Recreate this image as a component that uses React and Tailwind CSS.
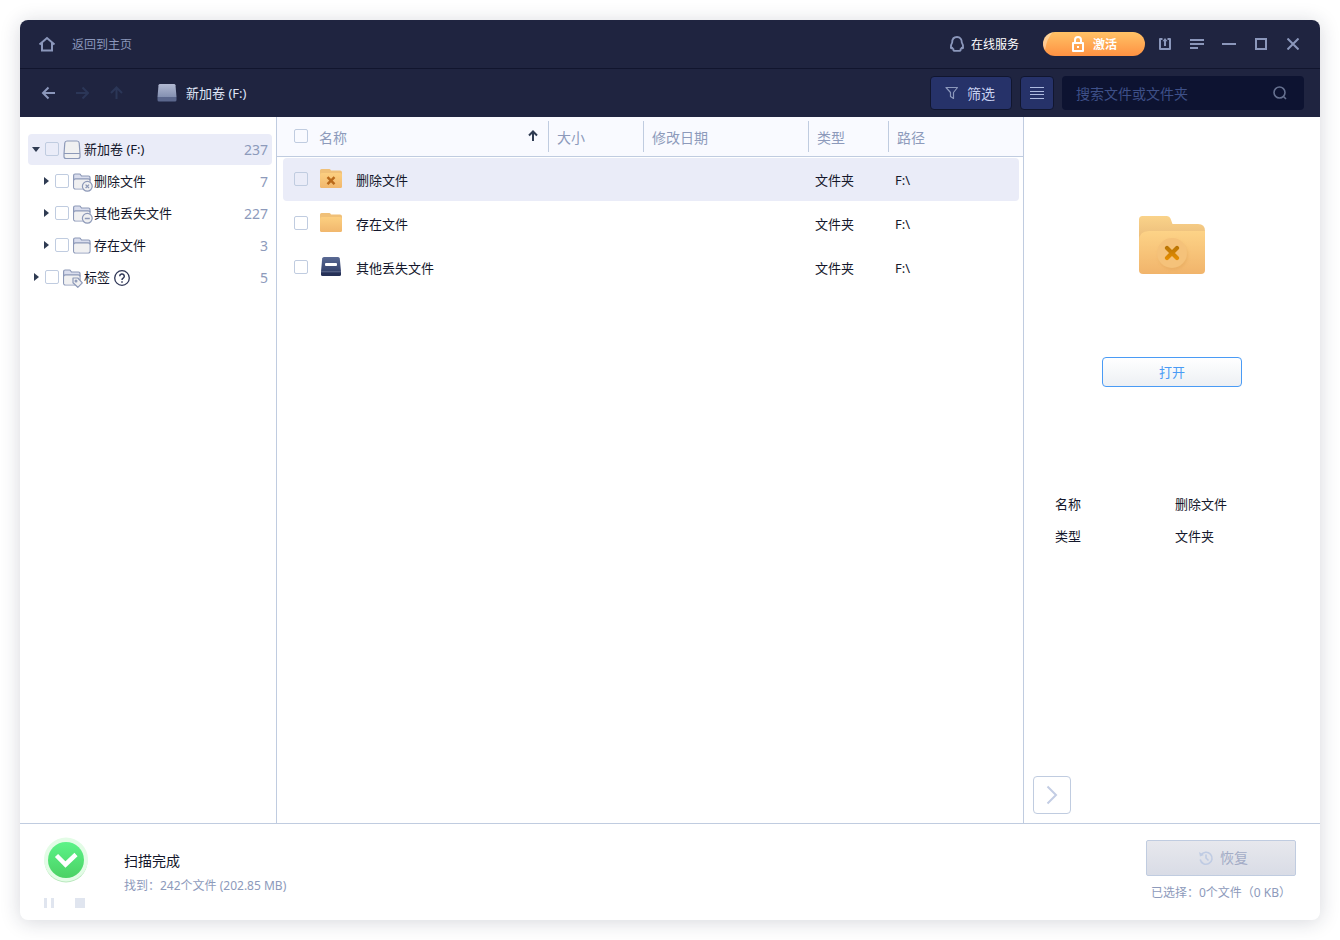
import { useState } from 'react';

const treeItems = [
  { id: 'volume', name: '新加卷 (F:)', count: 237, level: 0, icon: 'drive', open: true },
  { id: 'deleted', name: '删除文件', count: 7, level: 1, icon: 'deleted' },
  { id: 'lost', name: '其他丢失文件', count: 227, level: 1, icon: 'lost' },
  { id: 'existing', name: '存在文件', count: 3, level: 1, icon: 'folder' },
  { id: 'tags', name: '标签', count: 5, level: 0, icon: 'tag', help: true },
];

const files = [
  { id: 'deleted', name: '删除文件', type: '文件夹', path: 'F:\\', icon: 'deleted' },
  { id: 'existing', name: '存在文件', type: '文件夹', path: 'F:\\', icon: 'folder' },
  { id: 'lost', name: '其他丢失文件', type: '文件夹', path: 'F:\\', icon: 'drive' },
];

const columns = ['大小', '修改日期', '类型', '路径'];

function Checkbox({ label }) {
  return (
    <input
      type="checkbox"
      aria-label={label}
      className="mb-0.5 size-3.5 shrink-0 appearance-none rounded-xs border border-[#c0cce0] checked:bg-[#4a9bf5]"
    />
  );
}

function Caret({ open }) {
  return (
    <svg className="mb-0.5" width="10" height="10" viewBox="0 0 10 10" fill="#2f3b52">
      {open ? <path d="M1 3h8L5 8z" /> : <path d="M3 1v8l5-4z" />}
    </svg>
  );
}

function TreeIcon({ type }) {
  if (type === 'drive') {
    return (
      <svg width="18" height="20" viewBox="0 0 18 20" fill="#f0f0f1" stroke="#8d99b8" strokeWidth="1.200">
        <path d="M4 1h10q2 0 2.200 2L17 14v2.500q0 2-2 2H3q-2 0-2-2V14L1.800 3Q2 1 4 1z" />
        <path d="M1 13.500h16" />
      </svg>
    );
  }
  return (
    <svg width="20" height="20" viewBox="0 0 20 20" fill="none" stroke="#8d99b8" strokeWidth="1.200">
      <path d="M0.600 15V3.500Q0.600 2 2.100 2H6.500Q7.300 2 7.800 3L8.500 4H15.500Q17 4 17 5.500V15Q17 17 15 17H2.600Q0.600 17 0.600 15z" fill="#d9dded" />
      <path d="M1.200 15.500V8.500Q1.200 7 2.700 7H15Q16.400 7 16.400 8.500V15.500Q16.400 16.400 15 16.400H2.700Q1.200 16.400 1.200 15.500z" fill="#f0f0f1" stroke="none" />
      <path d="M0.600 8.500Q0.600 6.800 2.600 6.800H15Q17 6.800 17 8.500" />
      {type === 'deleted' && (
        <>
          <circle cx="14.300" cy="14.300" r="4.900" fill="#f0f0f1" />
          <path d="M12.600 12.600l3.400 3.400M16 12.600l-3.400 3.400" strokeWidth="1.300" />
        </>
      )}
      {type === 'lost' && (
        <>
          <circle cx="14.300" cy="14.300" r="4.900" fill="#f0f0f1" />
          <path d="M11.800 14.500h5" strokeWidth="1.300" />
        </>
      )}
      {type === 'tag' && (
        <>
          <path d="M10 10h4.800l4.500 4.800-4.500 4.500L10 14.800z" fill="#f0f0f1" strokeLinejoin="round" />
          <circle cx="13" cy="13" r="0.900" />
        </>
      )}
    </svg>
  );
}

function FileIcon({ type }) {
  if (type === 'drive') {
    return (
      <svg width="22" height="22" viewBox="0 0 22 22">
        <defs>
          <linearGradient id="drive-dark" x1="0" y1="0" x2="0" y2="1">
            <stop stopColor="#5a6a94" />
            <stop offset="1" stopColor="#34426b" />
          </linearGradient>
        </defs>
        <path d="M4 1h14q1.600 0 1.800 1.600L21 15.500H1L2.200 2.600Q2.400 1 4 1z" fill="url(#drive-dark)" />
        <path d="M1 15.500h20V18.500q0 1.500-1.500 1.500h-17Q1 20 1 18.500z" fill="#263157" />
        <path d="M1 15.500h20v1H1z" fill="#46547e" />
        <rect x="5" y="7" width="12" height="3" rx="1" fill="#fff" />
      </svg>
    );
  }
  return (
    <svg width="22" height="22" viewBox="0 0 22 22">
      <defs>
        <linearGradient id="folder-small" x1="0" y1="0" x2="0" y2="1">
          <stop stopColor="#fccf80" />
          <stop offset="1" stopColor="#f1b76d" />
        </linearGradient>
      </defs>
      <path d="M0 9V2.500Q0 1 1.500 1H9.500Q10.500 1 11 2.500H20Q22 2.500 22 4.500V9z" fill="#f0c078" />
      <path d="M0 7Q0 5 2 5H20Q22 5 22 7V18.500Q22 20 20.500 20H1.500Q0 20 0 18.500z" fill="url(#folder-small)" />
      {type === 'deleted' && (
        <path d="M7.500 9.200l7 7M14.500 9.200l-7 7" stroke="#b9691b" strokeWidth="2.400" />
      )}
    </svg>
  );
}

function LargeFolder() {
  return (
    <svg width="66" height="58" viewBox="0 0 66 58">
      <defs>
        <linearGradient id="folder-back" x1="0" y1="0" x2="0" y2="1">
          <stop stopColor="#fad38a" />
          <stop offset="1" stopColor="#e9b978" />
        </linearGradient>
        <linearGradient id="folder-front" x1="0" y1="0" x2="0" y2="1">
          <stop stopColor="#fdd387" />
          <stop offset="1" stopColor="#f1b46b" />
        </linearGradient>
        <linearGradient id="folder-cross" gradientUnits="userSpaceOnUse" x1="0" y1="30" x2="0" y2="44">
          <stop stopColor="#b87404" />
          <stop offset="1" stopColor="#e88f00" />
        </linearGradient>
        <filter id="badge-shadow" x="-20%" y="-20%" width="150%" height="150%">
          <feDropShadow dx="1" dy="2" stdDeviation="1.500" floodColor="#d99748" floodOpacity="0.3" />
        </filter>
      </defs>
      <path d="M0 26V3.500Q0 0 3.500 0H28Q30.500 0 31.500 2.500L33.500 8H59Q66 8 66 15V26z" fill="url(#folder-back)" />
      <path d="M0 25Q0 15 10 15H66V54Q66 58 62 58H4Q0 58 0 54z" fill="url(#folder-front)" />
      <circle cx="33" cy="37" r="15" fill="#f5c27a" filter="url(#badge-shadow)" />
      <path d="M28 32l10 10M38 32l-10 10" stroke="url(#folder-cross)" strokeWidth="4.200" strokeLinecap="round" />
    </svg>
  );
}

function TitleBar() {
  const windowButton = 'flex h-8 w-8 items-center justify-center';

  return (
    <div className="flex h-12 items-center bg-[#1f2440] pr-[11px] pl-[18px] text-xs text-[#8b97bb]">
      <button className="flex items-center gap-4">
        <svg width="18" height="18" viewBox="0 0 18 18" fill="none" stroke="#8b97bb" strokeWidth="2">
          <path d="M1.500 9.500L9 3l7.500 6.500M4 8v7.500h10V8" />
        </svg>
        <span className="pt-0.5">返回到主页</span>
      </button>
      <button className="ml-auto flex items-center gap-1.5 text-white">
        <svg width="16" height="18" viewBox="0 0 16 18" fill="none" stroke="#8b97bb" strokeWidth="1.800" strokeLinejoin="round">
          <path d="M8 2C4.800 2 3.200 4.500 3.200 7.500 2.200 9 1.700 10.800 1.900 13q.6.500 1.400-.2.500 1 1.200 1.500-.6 1.200.6 1.500h5.800q1.200-.3.600-1.500.7-.5 1.200-1.500.8.700 1.400.2C14.300 10.800 13.800 9 12.800 7.500 12.800 4.500 11.200 2 8 2z" />
        </svg>
        <span className="pt-0.5">在线服务</span>
      </button>
      <button className="relative mr-1 ml-6 flex h-6 w-[102px] items-center justify-center gap-2 overflow-hidden rounded-full bg-linear-to-b from-[#ffc266] to-[#ff9142] font-bold text-white">
        <svg className="absolute top-0 left-0" width="12" height="24" viewBox="0 0 12 24" fill="#fff" fillOpacity="0.35">
          <path d="M10 0Q4 6 2 18L0 14V0z" />
        </svg>
        <svg width="14" height="18" viewBox="0 0 14 18" fill="none" stroke="#fff" strokeWidth="2" strokeLinejoin="round">
          <path d="M2 8h10v8H2zM4 8V5a3 3 0 0 1 6 0v3" />
          <path d="M6 12h2" />
        </svg>
        <span className="pt-0.5">激活</span>
      </button>
      <button className={windowButton} aria-label="分享">
        <svg width="14" height="14" viewBox="0 0 14 14" fill="none" stroke="#8b97bb" strokeWidth="2" strokeLinejoin="round">
          <path d="M4.500 2H2v10h10V2H9.500M7 9V3" />
          <path d="M4.500 4.200L7 1l2.500 3.200z" fill="#8b97bb" stroke="none" />
        </svg>
      </button>
      <button className={windowButton} aria-label="菜单">
        <svg width="14" height="12" viewBox="0 0 14 12" stroke="#8b97bb" strokeWidth="2">
          <path d="M0 2h14M0 6h14M0 10h8" />
        </svg>
      </button>
      <button className={windowButton} aria-label="最小化">
        <svg width="14" height="2" viewBox="0 0 14 2" stroke="#8b97bb" strokeWidth="2">
          <path d="M0 1h14" />
        </svg>
      </button>
      <button className={windowButton} aria-label="最大化">
        <svg width="12" height="12" viewBox="0 0 12 12" fill="none" stroke="#8b97bb" strokeWidth="2">
          <path d="M1 1h10v10H1z" />
        </svg>
      </button>
      <button className={windowButton} aria-label="关闭">
        <svg width="12" height="12" viewBox="0 0 12 12" stroke="#8b97bb" strokeWidth="2">
          <path d="M0.500 0.500l11 11M11.500 0.500l-11 11" />
        </svg>
      </button>
    </div>
  );
}

function Toolbar() {
  return (
    <div className="flex h-[49px] items-center border-t border-[#11152e] bg-[#1f2440] pr-4 pl-[21px]">
      <div className="flex gap-5">
        <button aria-label="后退">
          <svg width="14" height="14" viewBox="0 0 14 14" fill="none" stroke="#8b97bb" strokeWidth="2">
            <path d="M7.500 1.500L2 7l5.500 5.500M2 7h12" />
          </svg>
        </button>
        <button aria-label="前进" disabled>
          <svg width="14" height="14" viewBox="0 0 14 14" fill="none" stroke="#2b3657" strokeWidth="2">
            <path d="M7.500 1.500L13 7l-5.500 5.500M13 7H1" />
          </svg>
        </button>
        <button aria-label="向上" disabled>
          <svg width="14" height="14" viewBox="0 0 14 14" fill="none" stroke="#2b3657" strokeWidth="2">
            <path d="M2 7l5.500-5.500L13 7M7.500 1.500V13" />
          </svg>
        </button>
      </div>
      <div className="ml-[34px] flex items-center gap-[9px] text-[13px] text-[#dfe5f6]">
        <svg width="20" height="18" viewBox="0 0 20 18">
          <defs>
            <linearGradient id="drive-light" x1="0" y1="0" x2="0" y2="1">
              <stop stopColor="#b1b9d2" />
              <stop offset="1" stopColor="#8490b1" />
            </linearGradient>
          </defs>
          <path d="M3 0h14q1.300 0 1.500 1.300L19.500 13H0.500L1.500 1.300Q1.700 0 3 0z" fill="url(#drive-light)" />
          <path d="M0.500 13h19v3q0 1.500-1.500 1.500H2Q.500 17.500.500 16z" fill="#5b678d" />
        </svg>
        <span className="pt-0.5">新加卷 (F:)</span>
      </div>
      <button className="ml-auto flex h-[34px] w-[82px] items-center justify-center gap-2 rounded-sm border border-[#11162f] bg-[#263269] pr-0.5 text-sm text-[#c6d0f0]">
        <svg width="14" height="14" viewBox="0 0 14 14" fill="none" stroke="#8b97bb" strokeWidth="1.200" strokeLinejoin="round">
          <path d="M1 1.500h11.500L8.500 6.500V12.500l-3-2V6.500z" />
        </svg>
        <span className="pt-0.5">筛选</span>
      </button>
      <button aria-label="视图" className="ml-2 flex h-[34px] w-[34px] items-center justify-center rounded-sm border border-[#11162f] bg-[#263269]">
        <svg width="14" height="14" viewBox="0 0 14 14" stroke="#aebbe0">
          <path d="M0 1.500h14M0 5.500h14M0 8.500h14M0 12.500h14" />
        </svg>
      </button>
      <div className="ml-2 flex h-[34px] w-[242px] items-center rounded-sm bg-[#0d1331] pr-4 pl-3.5">
        <input
          type="text"
          aria-label="搜索"
          placeholder="搜索文件或文件夹"
          className="min-w-0 flex-1 bg-transparent pt-0.5 text-sm text-[#c6d0f0] outline-none placeholder:text-[#3e5088]"
        />
        <svg width="16" height="16" viewBox="0 0 16 16" fill="none" stroke="#65708f" strokeWidth="1.600">
          <circle cx="7.500" cy="7.500" r="5.500" />
          <path d="M11.500 11.500l2.500 2.500" />
        </svg>
      </div>
    </div>
  );
}

function Sidebar({ active, onSelect }) {
  return (
    <aside className="w-[257px] shrink-0 border-r border-[#c0cce0] pt-[17px] pr-1 pl-2">
      <ul className="flex flex-col gap-px">
        {treeItems.map((item) => (
          <li
            key={item.id}
            onClick={() => onSelect(item.id)}
            className={`flex h-[31px] items-center rounded-sm pr-1 text-[13px] ${item.level ? 'pl-[13px]' : 'pl-[3px]'} ${active === item.id ? 'bg-[#eaecf8]' : ''}`}
          >
            <button aria-label="展开" className="mr-1">
              <Caret open={item.open} />
            </button>
            <Checkbox label={item.name} />
            <span className="ml-1 flex w-[21px] shrink-0">
              <TreeIcon type={item.icon} />
            </span>
            <span>{item.name}</span>
            {item.help && (
              <button aria-label="帮助" className="ml-1">
                <svg width="16" height="16" viewBox="0 0 16 16" fill="none" stroke="#2f3657" strokeWidth="1.300">
                  <circle cx="8" cy="8" r="7.300" />
                  <path d="M5.700 6.300a2.300 2.300 0 1 1 3.500 1.900Q8 8.900 8 10M8 11.200v1.500" strokeWidth="1.500" />
                </svg>
              </button>
            )}
            <span className="ml-auto text-sm text-[#8d9abb]">{item.count}</span>
          </li>
        ))}
      </ul>
    </aside>
  );
}

function FileTable({ active, onSelect }) {
  return (
    <main className="min-w-0 flex-1">
      <table className="block text-[13px]">
        <thead className="block border-b border-[#c0cce0] bg-[#f9faff] text-sm text-[#8d9abb]">
          <tr className="grid grid-cols-[271px_95px_165px_80px_minmax(0,1fr)] py-1 text-left">
            <th className="flex h-[31px] items-center pr-2.5 pl-[17px] font-normal">
              <Checkbox label="全选" />
              <span className="ml-[11px] pt-0.5">名称</span>
              <svg className="mb-0.5 ml-auto" width="10" height="12" viewBox="0 0 10 12" fill="none" stroke="#2f3b52" strokeWidth="2">
                <path d="M1 5.500L5 1.500l4 4M5 2v9" />
              </svg>
            </th>
            {columns.map((column) => (
              <th key={column} className="flex h-[31px] items-center border-l border-[#c0cce0] pt-0.5 pl-2 font-normal">
                {column}
              </th>
            ))}
          </tr>
        </thead>
        <tbody className="mt-px mr-1 ml-1.5 flex flex-col gap-px">
          {files.map((file) => (
            <tr
              key={file.id}
              onClick={() => onSelect(file.id)}
              className={`grid h-[43px] grid-cols-[265px_95px_165px_80px_minmax(0,1fr)] items-center rounded-sm ${active === file.id ? 'bg-[#eaecf8]' : ''}`}
            >
              <td className="flex items-center pl-[11px]">
                <Checkbox label={file.name} />
                <span className="mr-3.5 mb-0.5 ml-3">
                  <FileIcon type={file.icon} />
                </span>
                <span className="pt-0.5">{file.name}</span>
              </td>
              <td></td>
              <td></td>
              <td className="pt-0.5 pl-[7px]">{file.type}</td>
              <td className="pt-0.5 pl-[7px]">{file.path}</td>
            </tr>
          ))}
        </tbody>
      </table>
    </main>
  );
}

function DetailPanel({ file }) {
  return (
    <aside className="flex w-[297px] shrink-0 flex-col items-center border-l border-[#c0cce0] pt-[99px] text-[13px]">
      <LargeFolder />
      <button className="mt-[83px] h-[30px] w-[140px] rounded-sm border border-[#4a9bf5] bg-linear-to-b from-white to-[#edf0f4] pt-0.5 text-[#4a9bf5]">
        打开
      </button>
      <dl className="mt-[101px] grid w-full grid-cols-[120px_1fr] pl-[31px] leading-8">
        <dt>名称</dt>
        <dd>{file.name}</dd>
        <dt>类型</dt>
        <dd>{file.type}</dd>
      </dl>
      <button aria-label="收起" className="mt-auto mb-[9px] ml-[9px] flex size-[38px] items-center justify-center self-start rounded-sm border border-[#c0cce0]">
        <svg width="12" height="20" viewBox="0 0 12 20" fill="none" stroke="#c3cde4" strokeWidth="2">
          <path d="M1.500 1.500L10 10l-8.500 8.500" />
        </svg>
      </button>
    </aside>
  );
}

function StatusBar() {
  return (
    <footer className="flex h-[97px] shrink-0 border-t border-[#c0cce0] pr-6 pl-6">
      <div className="mt-3 w-11">
        <svg width="44" height="48" viewBox="0 0 44 48">
          <defs>
            <linearGradient id="done" x1="0" y1="0" x2="0" y2="1">
              <stop stopColor="#5df388" />
              <stop offset="1" stopColor="#4bd164" />
            </linearGradient>
          </defs>
          <circle cx="22" cy="25" r="21.500" fill="#b9e8bd" />
          <circle cx="22" cy="23.500" r="22" fill="#e3fce6" />
          <circle cx="22" cy="24" r="18" fill="url(#done)" />
          <path d="M12.500 19.500l9 9L32 18.500" fill="none" stroke="#fff" strokeWidth="4.500" />
        </svg>
        <div className="mt-3.5 flex justify-between pr-[3px]">
          <button aria-label="暂停" className="flex gap-1" disabled>
            <span className="h-2.5 w-[3px] bg-[#e0e5ef]"></span>
            <span className="h-2.5 w-[3px] bg-[#e0e5ef]"></span>
          </button>
          <button aria-label="停止" className="size-2.5 bg-[#e0e5ef]" disabled></button>
        </div>
      </div>
      <div className="mt-[25px] ml-9">
        <p className="text-sm leading-6">扫描完成</p>
        <p className="mt-px text-xs leading-6 text-[#8d9abb]">找到：242个文件 (202.85 MB)</p>
      </div>
      <div className="mt-4 ml-auto w-[150px]">
        <button disabled className="flex h-9 w-full items-center justify-center gap-1.5 rounded-xs border border-[#c0cce0] bg-linear-to-b from-[#e7e8ed] to-[#d9dce6] pl-1 text-sm text-[#a3acc6]">
          <svg width="16" height="16" viewBox="0 0 16 16" fill="none" stroke="#bfcbe3" strokeWidth="1.600">
            <path d="M3 5a6 6 0 1 1-.8 4.500M8 4.500V8l2.500 2.500" />
            <path d="M1 2l1 4.500L6 5z" fill="#bfcbe3" stroke="none" />
          </svg>
          恢复
        </button>
        <p className="mt-[5px] text-center text-xs leading-6 text-[#8d9abb]">已选择：0个文件（0 KB）</p>
      </div>
    </footer>
  );
}

export default function App() {
  const [active, setActive] = useState('volume');
  const [selected, setSelected] = useState('deleted');
  const file = files.find((f) => f.id === selected);

  return (
    <div className="h-screen bg-white p-5 font-['Noto_Sans','Noto_Sans_CJK_SC',sans-serif] text-[#14172b]">
      <div className="flex h-full flex-col overflow-hidden rounded-lg bg-white shadow-[0_2px_20px_rgba(30,35,60,0.18)]">
        <header className="shrink-0">
          <TitleBar />
          <Toolbar />
        </header>
        <div className="flex min-h-0 flex-1">
          <Sidebar active={active} onSelect={setActive} />
          <FileTable active={selected} onSelect={setSelected} />
          <DetailPanel file={file} />
        </div>
        <StatusBar />
      </div>
    </div>
  );
}
